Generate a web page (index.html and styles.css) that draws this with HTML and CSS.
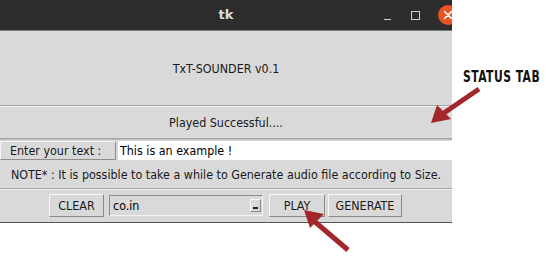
FILE: index.html
```html
<!DOCTYPE html>
<html>
<head>
<meta charset="utf-8">
<link rel="stylesheet" href="styles.css">
</head>
<body>
<div class="stage">
  <div class="window">
    <div class="titlebar">
      <span class="title">tk</span>
      <div class="controls">
        <span class="ctl-min"></span>
        <span class="ctl-max"></span>
        <span class="ctl-close">
          <svg width="20" height="20" viewBox="0 0 20 20"><path d="M6.5 6.5 L13.5 13.5 M13.5 6.5 L6.5 13.5" stroke="#fff" stroke-width="1.6" stroke-linecap="round"/></svg>
        </span>
      </div>
    </div>
    <div class="header">TxT-SOUNDER v0.1</div>
    <div class="status">Played Successful....</div>
    <div class="entry-row">
      <div class="entry-label">Enter your text :</div>
      <div class="entry-field">This is an example !</div>
    </div>
    <div class="note">NOTE* : It is possible to take a while to Generate audio file according to Size.</div>
    <div class="buttons">
      <div class="btn btn-clear">CLEAR</div>
      <div class="combo">
        <span class="combo-text">co.in</span>
        <span class="combo-arrow"><svg width="5" height="2" viewBox="0 0 5 2"><rect x="0" y="0" width="5" height="2" fill="#222"/></svg></span>
      </div>
      <div class="btn btn-play">PLAY</div>
      <div class="btn btn-gen">GENERATE</div>
    </div>
  </div>
  <div class="annot-label">STATUS TAB</div>
  <svg class="arrow arrow-status" width="60" height="45" viewBox="0 0 60 45">
    <path d="M52 4 L14 30" stroke="#a3262a" stroke-width="5" stroke-linecap="butt"/>
    <path d="M4 38 L10 20 L24 34 Z" fill="#a3262a"/>
  </svg>
  <svg class="arrow arrow-play" width="60" height="55" viewBox="0 0 60 55">
    <path d="M50 46 L16 17" stroke="#a3262a" stroke-width="5"/>
    <path d="M6 6 L26 10 L12 24 Z" fill="#a3262a"/>
  </svg>
</div>
</body>
</html>
```
FILE: styles.css
```css
html, body {
  margin: 0;
  padding: 0;
  background: #ffffff;
}
.stage {
  position: relative;
  width: 552px;
  height: 263px;
  overflow: hidden;
  font-family: "DejaVu Sans", sans-serif;
  font-stretch: condensed;
  font-size: 12.4px;
  color: #1a1a1a;
}
.window {
  width: 452px;
  background: #d9d9d9;
  display: flex;
  flex-direction: column;
  overflow: hidden;
}
.titlebar {
  height: 30px;
  background: #2c2c2c;
  border-bottom: 1px solid #7a7a7a;
  position: relative;
  display: flex;
  align-items: center;
  justify-content: center;
}
.title {
  color: #dcdcdc;
  font-weight: bold;
  font-stretch: normal;
  font-size: 13px;
  margin-top: -1px;
}
.controls {
  position: absolute;
  right: -6px;
  top: 5px;
  display: flex;
  align-items: center;
}
.ctl-min {
  width: 7px;
  height: 1px;
  background: #d0d0d0;
  margin-top: 8px;
  margin-right: 20px;
}
.ctl-max {
  width: 7px;
  height: 7px;
  border: 1px solid #d0d0d0;
  margin-right: 18px;
}
.ctl-close {
  width: 20px;
  height: 20px;
  border-radius: 50%;
  background: #e95420;
  display: block;
}
.ctl-close svg { display: block; }
.header {
  height: 74px;
  display: flex;
  align-items: center;
  justify-content: center;
  border-bottom: 1px solid #a6a6a6;
  box-shadow: 0 1px 0 #f0f0f0;
}
.status {
  height: 31px;
  margin-top: 1px;
  display: flex;
  align-items: center;
  justify-content: center;
  border-bottom: 1px solid #a6a6a6;
  box-shadow: 0 1px 0 #bcbcbc;
}
.entry-row {
  margin-top: 2px;
  height: 19px;
  display: flex;
}
.entry-label {
  width: 116px;
  box-sizing: border-box;
  border: 1px solid;
  border-color: #f4f4f4 #8e8e8e #8e8e8e #f4f4f4;
  display: flex;
  align-items: center;
  padding-left: 9px;
  margin-right: 2px;
}
.entry-field {
  flex: 1;
  background: #ffffff;
  display: flex;
  align-items: center;
  padding-left: 2px;
  color: #000;
}
.note {
  height: 27px;
  display: flex;
  align-items: center;
  justify-content: center;
  border-bottom: 1px solid #a6a6a6;
  box-shadow: 0 1px 0 #efefef;
  margin-top: 1px;
  white-space: nowrap;
}
.buttons {
  height: 33px;
  display: flex;
  align-items: center;
  padding-left: 49px;
  border-bottom: 1px solid #555;
}
.btn {
  height: 23px;
  box-sizing: border-box;
  border: 1px solid;
  border-color: #f8f8f8 #8a8a8a #8a8a8a #f8f8f8;
  display: flex;
  align-items: center;
  justify-content: center;
}
.btn-clear { width: 55px; }
.btn-play { width: 56px; margin-left: 6px; }
.btn-gen { width: 74px; margin-left: 3px; }
.combo {
  width: 154px;
  height: 21px;
  margin-left: 5px;
  box-sizing: border-box;
  border: 1px solid;
  border-color: #8a8a8a #f4f4f4 #f4f4f4 #8a8a8a;
  display: flex;
  align-items: center;
  justify-content: space-between;
  padding-left: 3px;
  color: #000;
}
.combo-arrow {
  width: 11px;
  height: 13px;
  box-sizing: border-box;
  border: 1px solid;
  border-color: #f8f8f8 #8a8a8a #8a8a8a #f8f8f8;
  margin-right: 1px;
  display: flex;
  align-items: flex-end;
  justify-content: center;
  padding-bottom: 2px;
}
.combo-arrow svg { display: block; }
.annot-label {
  position: absolute;
  left: 463px;
  top: 68px;
  white-space: nowrap;
  font-family: "DejaVu Sans", sans-serif;
  font-stretch: condensed;
  font-weight: bold;
  font-size: 15px;
  letter-spacing: 0.6px;
  color: #111;
  transform: scaleX(0.8);
  transform-origin: left center;
}
.arrow { position: absolute; display: block; }
.arrow-status { left: 427px; top: 85px; }
.arrow-play { left: 298px; top: 204px; }
```
